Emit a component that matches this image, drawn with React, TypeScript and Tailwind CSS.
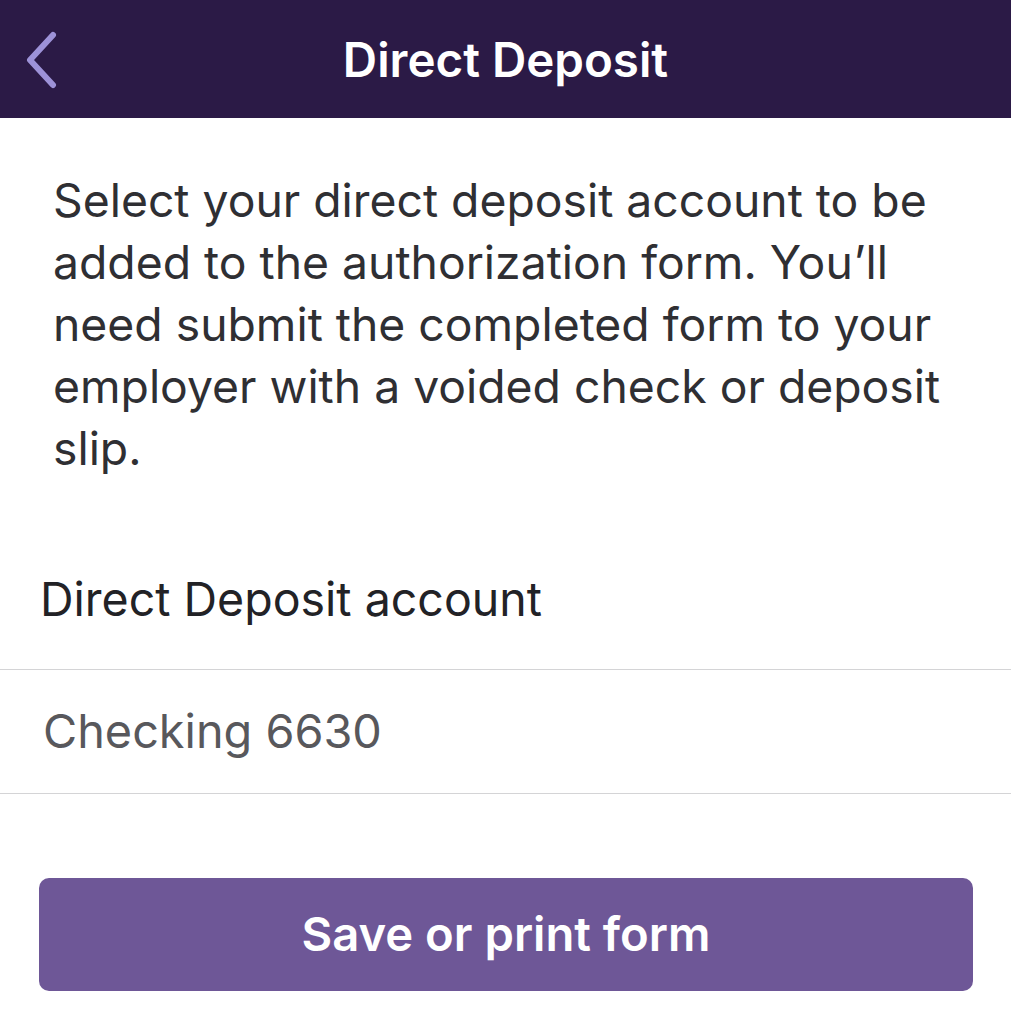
import React from "react";

export default function App() {
  return (
    <div className="w-[1011px] h-[1024px] bg-white overflow-hidden" style={{ fontFamily: "Inter, 'Noto Sans', sans-serif" }}>
      <div className="relative h-[118px] bg-[#2b1a46] flex items-center justify-center">
        <svg className="absolute left-[22px] top-[31px]" width="38" height="58" viewBox="0 0 38 58" fill="none">
          <path d="M31 4 L8 29 L31 54" stroke="#9d92d8" strokeWidth="6" strokeLinecap="round" strokeLinejoin="round" />
        </svg>
        <div className="text-white font-semibold text-[47.5px] leading-none mt-[2px]">Direct Deposit</div>
      </div>
      <div className="pl-[53px] pr-[20px]">
        <p className="mt-[51px] text-[#2f2f33] text-[46.3px] leading-[62px]">
          Select your direct deposit account to be<br />
          added to the authorization form. You’ll<br />
          need submit the completed form to your<br />
          employer with a voided check or deposit<br />
          slip.
        </p>
      </div>
      <div className="pl-[40px] mt-[89px] pb-[39px] text-[46.5px] leading-[62px] text-[#222226]">
        Direct Deposit account
      </div>
      <div className="border-t border-[#d4d4d6] h-[124px] flex items-center pl-[43px] text-[46.8px] text-[#58585c]">
        Checking 6630
      </div>
      <div className="border-t border-[#d4d4d6] px-[39px] pt-[84px]">
        <div className="h-[113px] mr-[-1px] rounded-[10px] bg-[#6e5797] flex items-center justify-center text-white font-semibold text-[47.2px]">
          Save or print form
        </div>
      </div>
    </div>
  );
}
